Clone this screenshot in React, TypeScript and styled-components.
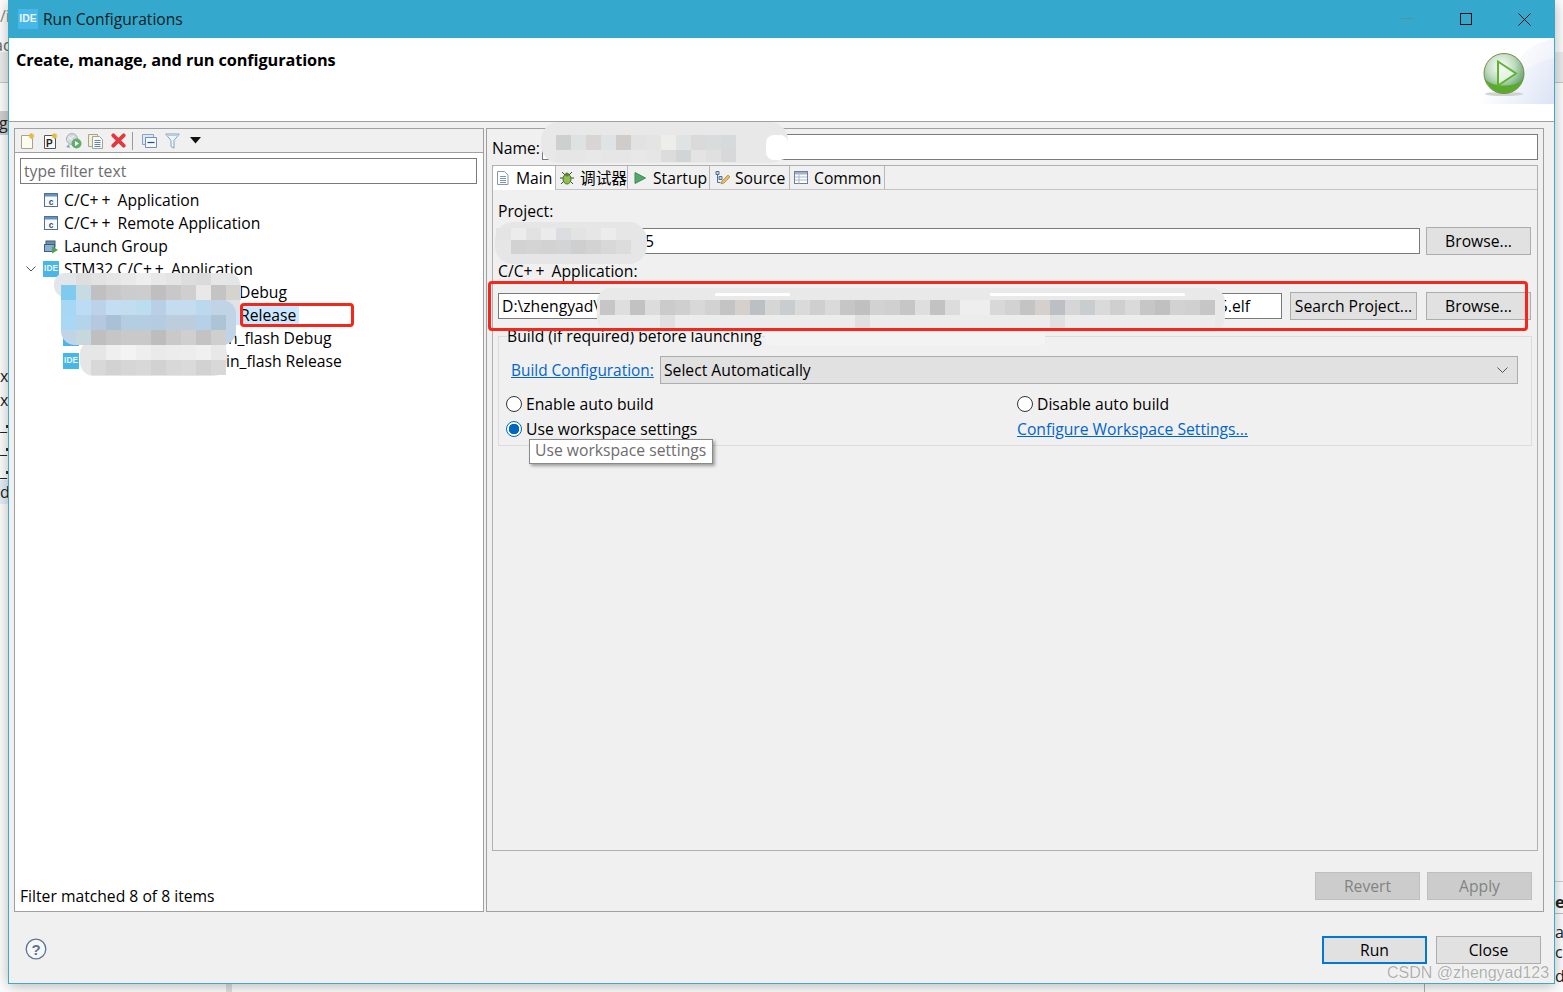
import React from "react";
import styled, { createGlobalStyle } from "styled-components";

const FONT = `"Open Sans", "Noto Sans", "Noto Sans CJK SC", sans-serif`;

const Global = createGlobalStyle`
  html, body { margin: 0; padding: 0; background: #fff; overflow: hidden; }
  * { box-sizing: border-box; }
`;

const Stage = styled.div`
  position: relative;
  width: 1563px;
  height: 992px;
  overflow: hidden;
  background: #fff;
  font-family: ${FONT};
  font-size: 15.7px;
  color: #000;
`;

/* desktop fragments behind the window */
const BackBand = styled.div<{ $x: number; $y: number; $w: number; $h: number; $bg: string }>`
  position: absolute;
  left: ${(p) => p.$x}px;
  top: ${(p) => p.$y}px;
  width: ${(p) => p.$w}px;
  height: ${(p) => p.$h}px;
  background: ${(p) => p.$bg};
`;
const BackText = styled.span<{ $x: number; $y: number; $c?: string; $b?: boolean }>`
  position: absolute;
  left: ${(p) => p.$x}px;
  top: ${(p) => p.$y}px;
  font-size: 16px;
  line-height: 20px;
  color: ${(p) => p.$c || "#222"};
  font-weight: ${(p) => (p.$b ? 700 : 400)};
`;

/* the dialog */
const Window = styled.div`
  position: absolute;
  left: 8px;
  top: 0;
  width: 1547px;
  height: 984px;
  display: flex;
  flex-direction: column;
  background: #f0f0f0;
  border: 1px solid #3aaacd;
  border-top: 0;
  box-shadow: 0 2px 14px rgba(0, 0, 0, 0.3);
`;
const TitleBar = styled.header`
  height: 38px;
  flex: none;
  margin: 0 -1px;
  background: #34a9cd;
  display: flex;
  align-items: center;
  padding: 0 1.5px 0 10px;
`;
const IdeBadge = styled.span<{ $size: number }>`
  width: ${(p) => p.$size}px;
  height: ${(p) => p.$size}px;
  flex: none;
  background: #47b6e8;
  color: #eaf7fd;
  font: 700 ${(p) => (p.$size * 0.52).toFixed(1)}px/1 "Liberation Sans", sans-serif;
  display: flex;
  align-items: center;
  justify-content: center;
`;
const TitleText = styled.span`
  margin-left: 5px;
  font-size: 15.6px;
  color: #0d1c22;
`;
const WinControls = styled.div`
  margin-left: auto;
  display: flex;
  align-items: center;
`;
const WinButton = styled.span`
  width: 58.5px;
  height: 38px;
  display: flex;
  align-items: center;
  justify-content: center;
`;
const Banner = styled.div`
  height: 84px;
  flex: none;
  background: #fff;
  border-bottom: 1px solid #a0a0a0;
  position: relative;
  padding: 10px 7px;
  display: flex;
  justify-content: space-between;
  align-items: flex-start;
`;
const BannerTitle = styled.h1`
  margin: 0;
  font-size: 16.3px;
  line-height: 24px;
  font-weight: 700;
  letter-spacing: -0.1px;
`;
const BannerArt = styled.svg`
  width: 78px;
  height: 66px;
  margin: -10px -7px 0 0;
`;
const Main = styled.div`
  height: 790px;
  flex: none;
  padding: 6px 10px 0 5px;
  display: flex;
  gap: 2px;
`;
const LeftPane = styled.section`
  width: 470px;
  flex: none;
  display: flex;
  flex-direction: column;
  background: #fff;
  border: 1px solid #a0a0a0;
`;
const Toolbar = styled.div`
  height: 24px;
  flex: none;
  background: #f0f0f0;
  border-bottom: 1px solid #a0a0a0;
  display: flex;
  align-items: center;
  padding-left: 2px;
`;
const ToolButton = styled.span`
  width: 22.5px;
  height: 20px;
  flex: none;
  display: flex;
  align-items: center;
  justify-content: center;
`;
const ToolSep = styled.span`
  width: 1px;
  height: 18px;
  margin: 0 6px 0 2.5px;
  background: #9a9a9a;
`;
const FilterInput = styled.div`
  height: 26px;
  margin: 5px 6px 4px 5px;
  flex: none;
  border: 1px solid #7a7a7a;
  padding-left: 3px;
  line-height: 24px;
  color: #6d6d6d;
`;
const Tree = styled.ul`
  flex: 1;
  list-style: none;
  margin: 0;
  padding: 0;
`;
const TreeRow = styled.li<{ $depth: number }>`
  height: 23px;
  display: flex;
  align-items: center;
  padding-left: ${(p) => (p.$depth === 0 ? 28 : 48)}px;
  gap: 5px;
  white-space: pre;
`;
const Twisty = styled.span`
  width: 12px;
  margin-left: -17px;
  margin-right: 0;
  display: flex;
`;
const TreeIcon = styled.span`
  width: 16px;
  height: 16px;
  flex: none;
  display: flex;
  align-items: center;
  justify-content: center;
`;
const TreeLabel = styled.span<{ $selected?: boolean }>`
  line-height: 20px;
  background: ${(p) => (p.$selected ? "#cce8ff" : "transparent")};
  padding-right: ${(p) => (p.$selected ? 3 : 0)}px;
`;
const Plus = styled.span`
  letter-spacing: 3px;
`;
const Masked = styled.span<{ $w: number }>`
  display: inline-block;
  width: ${(p) => p.$w}px;
`;
const PaneStatus = styled.div`
  height: 30px;
  flex: none;
  padding-left: 5px;
  line-height: 30px;
`;
const RightPane = styled.section`
  flex: 1;
  min-width: 0;
  border: 1px solid #a0a0a0;
  padding: 5px 5px 0;
  display: flex;
  flex-direction: column;
`;
const NameRow = styled.div`
  height: 26px;
  flex: none;
  display: flex;
  align-items: center;
  gap: 2px;
`;
const NameLabel = styled.span`
  padding-top: 2px;
`;
const TextField = styled.div<{ $w?: number }>`
  height: 26px;
  ${(p) => (p.$w ? `width: ${p.$w}px; flex: none;` : "flex: 1; min-width: 0;")}
  background: #fff;
  border: 1px solid #7a7a7a;
  padding: 0 3px;
  line-height: 24px;
  white-space: pre;
  overflow: hidden;
  display: flex;
`;
const FieldTail = styled.span`
  margin-left: auto;
  margin-right: 28px;
`;
const Folder = styled.div`
  height: 686px;
  flex: none;
  margin-top: 5px;
  border: 1px solid #b0b0b0;
  display: flex;
  flex-direction: column;
`;
const TabStrip = styled.div`
  height: 24px;
  flex: none;
  display: flex;
  border-bottom: 1px solid #c4c4c4;
`;
const Tab = styled.div<{ $w: number; $pad: number; $active?: boolean }>`
  width: ${(p) => p.$w}px;
  height: ${(p) => (p.$active ? 24 : 23)}px;
  flex: none;
  background: ${(p) => (p.$active ? "#fff" : "#f0f0f0")};
  border-right: 1px solid #b8b8b8;
  border-top-left-radius: ${(p) => (p.$active ? 3 : 0)}px;
  display: flex;
  align-items: center;
  gap: 5px;
  padding-left: ${(p) => p.$pad}px;
  white-space: pre;
`;
const TabIcon = styled.span`
  width: 16px;
  height: 16px;
  flex: none;
  display: flex;
  align-items: center;
  justify-content: center;
`;
const TabBody = styled.div`
  flex: 1;
  padding: 10px 5px 0;
  display: flex;
  flex-direction: column;
`;
const FieldLabel = styled.label<{ $gap: number }>`
  height: 22px;
  flex: none;
  line-height: 22px;
  margin-top: ${(p) => p.$gap}px;
`;
const FieldRow = styled.div<{ $gap: number; $h: number }>`
  height: ${(p) => p.$h}px;
  flex: none;
  margin-top: ${(p) => p.$gap}px;
  display: flex;
  align-items: center;
  padding-right: 1px;
`;
const Button = styled.button<{ $w: number; $gap?: number; $kind?: "default" | "disabled" }>`
  width: ${(p) => p.$w}px;
  height: 28px;
  flex: none;
  margin-left: ${(p) => p.$gap || 0}px;
  padding: 0;
  font: inherit;
  line-height: 24px;
  border: ${(p) => (p.$kind === "default" ? "2px solid #0078d7" : p.$kind === "disabled" ? "1px solid #bfbfbf" : "1px solid #adadad")};
  background: ${(p) => (p.$kind === "disabled" ? "#cccccc" : "#e1e1e1")};
  color: ${(p) => (p.$kind === "disabled" ? "#838383" : "#000")};
`;
const Group = styled.fieldset`
  position: relative;
  height: 110px;
  flex: none;
  min-width: 0;
  margin: 16px 0 0;
  padding: 19px 13px 0 12px;
  border: 1px solid #dcdcdc;
  display: flex;
  flex-direction: column;
`;
const GroupTitle = styled.span`
  position: absolute;
  left: 8px;
  top: -11px;
  line-height: 20px;
  background: #f0f0f0;
`;
const ConfigRow = styled.div`
  height: 28px;
  flex: none;
  display: flex;
  align-items: center;
`;
const Link = styled.a`
  color: #0066cc;
  text-decoration: underline;
  white-space: nowrap;
`;
const ConfigLink = styled(Link)`
  width: 149px;
  flex: none;
  font-size: 15.4px;
`;
const Combo = styled.div`
  flex: 1;
  height: 28px;
  background: #e1e1e1;
  border: 1px solid #adadad;
  display: flex;
  align-items: center;
  justify-content: space-between;
  padding: 0 9px 0 3px;
`;
const RadioGrid = styled.div`
  margin: 7px 0 0 -5px;
  display: grid;
  grid-template-columns: 511px 1fr;
  grid-auto-rows: 25px;
  align-items: center;
`;
const RadioItem = styled.div`
  display: flex;
  align-items: center;
  gap: 4px;
`;
const RadioDot = styled.span<{ $on?: boolean }>`
  width: 16px;
  height: 16px;
  flex: none;
  border-radius: 50%;
  border: 1px solid ${(p) => (p.$on ? "#0067c0" : "#333")};
  background: ${(p) => (p.$on ? "radial-gradient(circle, #0067c0 0 5px, #fff 5.5px)" : "#fff")};
`;
const ActionRow = styled.div`
  flex: none;
  margin-top: 21px;
  padding-right: 6px;
  display: flex;
  justify-content: flex-end;
  gap: 7px;
`;
const Footer = styled.footer`
  flex: 1;
  display: flex;
  align-items: flex-start;
  padding: 24px 13px 0 16px;
`;
const HelpIcon = styled.svg`
  width: 22px;
  height: 22px;
  margin-top: 2px;
`;
const FooterButtons = styled.div`
  margin-left: auto;
  display: flex;
  gap: 9px;
`;

/* things lying over the window */
const Tooltip = styled.div`
  position: absolute;
  left: 529px;
  top: 439px;
  width: 184px;
  height: 25px;
  background: #fff;
  border: 1px solid #8a8a8a;
  box-shadow: 2px 2px 3px rgba(0, 0, 0, 0.35);
  color: #6d6d6d;
  padding-left: 5px;
  line-height: 20px;
`;
const Patch = styled.svg<{ $x: number; $y: number }>`
  position: absolute;
  left: ${(p) => p.$x}px;
  top: ${(p) => p.$y}px;
`;
const RedBox = styled.div<{ $x: number; $y: number; $w: number; $h: number }>`
  position: absolute;
  left: ${(p) => p.$x}px;
  top: ${(p) => p.$y}px;
  width: ${(p) => p.$w}px;
  height: ${(p) => p.$h}px;
  border: 3px solid #f5261a;
  border-radius: 4px;
`;
const Watermark = styled.div`
  position: absolute;
  left: 1387px;
  top: 963px;
  font: 16px/20px "Liberation Sans", sans-serif;
  color: rgba(120, 120, 120, 0.6);
  text-shadow: 0 0 1px #fff, 0 0 1px #fff;
  white-space: nowrap;
`;

/* ---------- icons ---------- */
const Doc = ({ p }: { p?: boolean }) => (
  <svg width="16" height="16" viewBox="0 0 16 16">
    <path d="M1.500 2.500h8l3 3v10h-11z" fill={p ? "#fafafa" : "#fbfbf0"} stroke={p ? "#555" : "#a8a48c"} />
    {p && <text x="3" y="14" fontSize="10" fontWeight="700" fontFamily="Liberation Sans" fill="#222">P</text>}
    <path d="M11.500 0v6M8.500 3h6M9.500 1l4 4M13.500 1l-4 4" stroke="#e3b93c" strokeWidth="1.100" />
  </svg>
);
const Duplicate = () => (
  <svg width="16" height="16" viewBox="0 0 16 16">
    <path d="M.5 1.500h9v12h-9z" fill="#f3efdd" stroke="#a8a48c" />
    <path d="M4.500 3.500h7l3 3v9h-10z" fill="#f8f8f4" stroke="#a8a48c" />
    <path d="M6.500 7.500h6M6.500 9.500h6M6.500 11.500h6M6.500 13.500h6" stroke="#5c86b8" />
  </svg>
);
const Launch = () => (
  <svg width="17" height="16" viewBox="0 0 17 16">
    <circle cx="7" cy="6" r="5.500" fill="#d5d9de" stroke="#a9b0b9" />
    <path d="M3 3l6 6M2 7l7-4" stroke="#f2f3f5" />
    <path d="M1 14l3-3 1 4z" fill="#8fa6bf" />
    <circle cx="11.500" cy="10.500" r="5" fill="#5fae6e" />
    <path d="M10 8l4 2.500-4 2.500z" fill="#fff" />
  </svg>
);
const RedX = () => (
  <svg width="15" height="15" viewBox="0 0 15 15">
    <path d="M2.300 2.300l10.400 10.400M12.700 2.300L2.300 12.700" stroke="#dd3b40" strokeWidth="3.800" strokeLinecap="round" />
  </svg>
);
const Collapse = () => (
  <svg width="16" height="16" viewBox="0 0 16 16">
    <path d="M.5 1.500h11v10H.5z" fill="#dfe8f1" stroke="#88a6c2" />
    <path d="M3.500 4.500h11v10h-11z" fill="#f6f9fc" stroke="#6f91b2" />
    <path d="M5.500 9.500h7" stroke="#1e4d7a" strokeWidth="1.200" />
  </svg>
);
const Funnel = () => (
  <svg width="15" height="16" viewBox="0 0 15 16">
    <path d="M.7 1h13.600L9 7.500v7.700l-3-1.700V7.500z" fill="#eef5f9" stroke="#7fa6bd" />
    <path d="M3 2.500h9" stroke="#b5ccd9" />
  </svg>
);
const DropTri = () => (
  <svg width="11" height="7" viewBox="0 0 11 7"><path d="M0 0h11L5.500 6.500z" fill="#111" /></svg>
);
const AppIcon = () => (
  <svg width="16" height="16" viewBox="0 0 16 16">
    <rect x="1.500" y="1.500" width="13" height="13" fill="#f7f9fb" stroke="#54708e" />
    <rect x="2" y="2" width="12" height="2.500" fill="#5f93c6" />
    <text x="8" y="12.500" fontSize="8.500" fontWeight="700" textAnchor="middle" fontFamily="Liberation Sans" fill="#3a4f66">c</text>
  </svg>
);
const GroupIcon = () => (
  <svg width="16" height="16" viewBox="0 0 16 16">
    <rect x="3" y="3" width="9" height="6" fill="#6c8fb0" stroke="#3e5d7c" />
    <rect x="1.500" y="6.500" width="10" height="7" fill="#8db0cc" stroke="#3e5d7c" />
    <path d="M9 8l6 4-6 3.500z" fill="#4ea35c" />
  </svg>
);
const PageIcon = () => (
  <svg width="14" height="16" viewBox="0 0 14 16">
    <path d="M1.500 1.500h7l3.500 3.500v9.500H1.500z" fill="#fff" stroke="#8b96a8" />
    <path d="M4 6.500h6M4 8.500h6M4 10.500h6M4 12.500h6" stroke="#7f93b4" />
  </svg>
);
const BugIcon = () => (
  <svg width="16" height="16" viewBox="0 0 16 16">
    <g stroke="#3c4a2e" strokeWidth="1">
      <path d="M3 2l3 3M13 2l-3 3M1 8h3M12 8h3M2 14l3-3M14 14l-3-3" />
    </g>
    <ellipse cx="8" cy="9" rx="4" ry="5" fill="#8fbf4d" stroke="#4d6b2c" />
    <circle cx="8" cy="4.500" r="2" fill="#5d7f35" />
  </svg>
);
const PlayIcon = () => (
  <svg width="14" height="14" viewBox="0 0 14 14">
    <path d="M2 1.500L12.500 7 2 12.500z" fill="#53a86a" stroke="#3f8a55" />
  </svg>
);
const SourceIcon = () => (
  <svg width="16" height="16" viewBox="0 0 16 16">
    <path d="M2 1.500h3v3H2zM5 6.500h3v3H5z" fill="#c8d6e8" stroke="#4d6f9c" />
    <path d="M3.500 4.500v8h3" stroke="#4d6f9c" fill="none" />
    <path d="M7 14l1-3 6-6 2 2-6 6z" fill="#e9bb62" stroke="#a87f38" strokeWidth=".7" />
  </svg>
);
const TableIcon = () => (
  <svg width="14" height="14" viewBox="0 0 14 14">
    <rect x=".5" y=".5" width="13" height="12" fill="#fff" stroke="#6f7f99" />
    <rect x="1" y="1" width="12" height="2.500" fill="#9db1cd" />
    <path d="M1 6h12M1 9h12M5 3.500v9" stroke="#a9b6ca" />
  </svg>
);

/* ---------- pixelated redactions ---------- */
type Row = { x: number; y: number; h: number; colors: string[]; w?: number };
type Blob = { x: number; y: number; w: number; h: number; r: number; fill: string };
const Mosaic = ({ x, y, w, h, blobs, rows }: { x: number; y: number; w: number; h: number; blobs: Blob[]; rows: Row[] }) => (
  <Patch $x={x} $y={y} width={w} height={h} viewBox={`${x} ${y} ${w} ${h}`}>
    {blobs.map((b, i) => (
      <rect key={i} x={b.x} y={b.y} width={b.w} height={b.h} rx={b.r} fill={b.fill} />
    ))}
    {rows.map((r, ri) =>
      r.colors.map((c, ci) => (
        <rect key={`${ri}-${ci}`} x={r.x + ci * (r.w || 15)} y={r.y} width={r.w || 15} height={r.h} fill={c} />
      ))
    )}
  </Patch>
);

const appGrays = ["#c6c6c6", "#dedede", "#c2c2c2", "#dcdcdc", "#cbcbcb", "#cfcfcf", "#d8d8d8", "#d2d2d2", "#c4c4c4", "#d6d0cc", "#bcc0c4", "#d6d6d6", "#c8cdd0", "#dadada", "#cfcfcf", "#dadada", "#c6c6c6", "#c0c0c0", "#d2d2d2", "#d0d0d0"];
const appRowA = Array.from({ length: 41 }, (_, i) => (i === 24 || i === 25 ? "#eeeeee" : appGrays[i % appGrays.length]));
const appRowB = Array.from({ length: 41 }, (_, i) => (i % 13 === 4 ? "#e0e0e0" : "#ececec"));

export default function App() {
  return (
    <Stage>
      <Global />
      <BackBand $x={0} $y={52} $w={8} $h={30} $bg="#eeeeee" />
      <BackBand $x={0} $y={82} $w={8} $h={1} $bg="#c9c9c9" />
      <BackBand $x={0} $y={111} $w={8} $h={24} $bg="#d2d2d2" />
      <BackBand $x={0} $y={480} $w={8} $h={24} $bg="#e5f1fb" />
      <BackBand $x={6} $y={425} $w={2} $h={3} $bg="#3a2a1a" />
      <BackBand $x={6} $y={448} $w={2} $h={3} $bg="#3a2a1a" />
      <BackBand $x={6} $y={471} $w={2} $h={3} $bg="#3a2a1a" />
      <BackBand $x={1555} $y={52} $w={8} $h={30} $bg="#eeeeee" />
      <BackBand $x={1555} $y={82} $w={8} $h={1} $bg="#c9c9c9" />
      <BackBand $x={1555} $y={881} $w={8} $h={1} $bg="#d0d0d0" />
      <BackBand $x={1555} $y={913} $w={8} $h={1} $bg="#c0c0c0" />
      <BackBand $x={226} $y={984} $w={6} $h={8} $bg="#e2e2e2" />
      <BackBand $x={1424} $y={984} $w={1} $h={8} $bg="#b0b0b0" />
      <BackText $x={0} $y={6} $c="#8b8b8b">/i</BackText>
      <BackText $x={-6} $y={35} $c="#666">ac</BackText>
      <BackText $x={-1} $y={113}>gt</BackText>
      <BackText $x={0} $y={366}>x</BackText>
      <BackText $x={0} $y={390}>x</BackText>
      <BackText $x={0} $y={415}>_</BackText>
      <BackText $x={0} $y={438}>_</BackText>
      <BackText $x={0} $y={461}>_</BackText>
      <BackText $x={0} $y={482}>d</BackText>
      <BackText $x={1555} $y={892} $b>e</BackText>
      <BackText $x={1555} $y={922}>al</BackText>
      <BackText $x={1555} $y={942}>c</BackText>
      <BackText $x={1555} $y={966}>d</BackText>

      <Window>
        <TitleBar>
          <IdeBadge $size={20}>IDE</IdeBadge>
          <TitleText>Run Configurations</TitleText>
          <WinControls>
            <WinButton>
              <svg width="12" height="2"><path d="M0 .5h12" stroke="#5a8ea3" /></svg>
            </WinButton>
            <WinButton>
              <svg width="12" height="12"><rect x=".5" y=".5" width="11" height="11" fill="none" stroke="#111" /></svg>
            </WinButton>
            <WinButton>
              <svg width="13" height="13"><path d="M.5.5l12 12M12.500.5l-12 12" stroke="#111" /></svg>
            </WinButton>
          </WinControls>
        </TitleBar>
        <Banner>
          <BannerTitle>Create, manage, and run configurations</BannerTitle>
          <BannerArt viewBox="0 0 78 66">
            <defs>
              <linearGradient id="bannerBg" gradientUnits="userSpaceOnUse" x1="20" y1="30" x2="78" y2="62">
                <stop offset="0" stopColor="#ffffff" />
                <stop offset="1" stopColor="#dde4f5" />
              </linearGradient>
              <radialGradient id="ball" cx="0.42" cy="0.32" r="0.78">
                <stop offset="0" stopColor="#ffffff" />
                <stop offset="0.45" stopColor="#bedcbe" />
                <stop offset="0.8" stopColor="#6aa576" />
                <stop offset="1" stopColor="#4f9a3c" />
              </radialGradient>
            </defs>
            <rect width="78" height="66" fill="url(#bannerBg)" />
            <path d="M0 0h78C58 6 50 10 44 22 L0 22z" fill="#fff" />
            <path d="M0 0h78v20C60 24 50 30 44 40L0 40z" fill="#fff" fillOpacity=".35" />
            <ellipse cx="28" cy="56" rx="19" ry="2" fill="#cfd3cf" />
            <circle cx="28" cy="35.500" r="20" fill="url(#ball)" stroke="#7c8a4a" />
            <path d="M8.800 40a20 20 0 0 0 38.400 0c-4 10-34 10-38.400 0z" fill="#58ac2a" />
            <path d="M22 23.500L40 35.500 22 47.500z" fill="#eef8ee" fillOpacity=".75" stroke="#5fb32f" strokeWidth="2" />
          </BannerArt>
        </Banner>
        <Main>
          <LeftPane>
            <Toolbar>
              <ToolButton><Doc /></ToolButton>
              <ToolButton><Doc p /></ToolButton>
              <ToolButton><Launch /></ToolButton>
              <ToolButton><Duplicate /></ToolButton>
              <ToolButton><RedX /></ToolButton>
              <ToolSep />
              <ToolButton><Collapse /></ToolButton>
              <ToolButton><Funnel /></ToolButton>
              <ToolButton><DropTri /></ToolButton>
            </Toolbar>
            <FilterInput>type filter text</FilterInput>
            <Tree>
              <TreeRow $depth={0}><TreeIcon><AppIcon /></TreeIcon><TreeLabel>C/C<Plus>++</Plus> Application</TreeLabel></TreeRow>
              <TreeRow $depth={0}><TreeIcon><AppIcon /></TreeIcon><TreeLabel>C/C<Plus>++</Plus> Remote Application</TreeLabel></TreeRow>
              <TreeRow $depth={0}><TreeIcon><GroupIcon /></TreeIcon><TreeLabel>Launch Group</TreeLabel></TreeRow>
              <TreeRow $depth={0}>
                <Twisty>
                  <svg width="10" height="6"><path d="M.5.500L5 5 9.500.5" fill="none" stroke="#555" /></svg>
                </Twisty>
                <TreeIcon><IdeBadge $size={16}>IDE</IdeBadge></TreeIcon>
                <TreeLabel>STM32 C/C<Plus>++</Plus> Application</TreeLabel>
              </TreeRow>
              <TreeRow $depth={1}><TreeIcon><IdeBadge $size={16}>IDE</IdeBadge></TreeIcon><TreeLabel><Masked $w={155} />Debug</TreeLabel></TreeRow>
              <TreeRow $depth={1}><TreeIcon><IdeBadge $size={16}>IDE</IdeBadge></TreeIcon><TreeLabel $selected><Masked $w={143} />5 Release</TreeLabel></TreeRow>
              <TreeRow $depth={1}><TreeIcon><IdeBadge $size={16}>IDE</IdeBadge></TreeIcon><TreeLabel><Masked $w={144} />n_flash Debug</TreeLabel></TreeRow>
              <TreeRow $depth={1}><TreeIcon><IdeBadge $size={16}>IDE</IdeBadge></TreeIcon><TreeLabel><Masked $w={142} />in_flash Release</TreeLabel></TreeRow>
            </Tree>
            <PaneStatus>Filter matched 8 of 8 items</PaneStatus>
          </LeftPane>
          <RightPane>
            <NameRow>
              <NameLabel>Name:</NameLabel>
              <TextField />
            </NameRow>
            <Folder>
              <TabStrip>
                <Tab $w={63} $pad={2} $active><TabIcon><PageIcon /></TabIcon>Main</Tab>
                <Tab $w={72} $pad={3}><TabIcon><BugIcon /></TabIcon>调试器</Tab>
                <Tab $w={82} $pad={4}><TabIcon><PlayIcon /></TabIcon>Startup</Tab>
                <Tab $w={80} $pad={4}><TabIcon><SourceIcon /></TabIcon>Source</Tab>
                <Tab $w={95} $pad={3}><TabIcon><TableIcon /></TabIcon>Common</Tab>
              </TabStrip>
              <TabBody>
                <FieldLabel $gap={0}>Project:</FieldLabel>
                <FieldRow $gap={5} $h={28}>
                  <TextField><Masked $w={143} />5</TextField>
                  <Button $w={105} $gap={6}>Browse...</Button>
                </FieldRow>
                <FieldLabel $gap={5}>C/C<Plus>++</Plus> Application:</FieldLabel>
                <FieldRow $gap={10} $h={28}>
                  <TextField $w={784}>D:\zhengyad\<FieldTail>5.elf</FieldTail></TextField>
                  <Button $w={127} $gap={8}>Search Project...</Button>
                  <Button $w={105} $gap={9}>Browse...</Button>
                </FieldRow>
                <Group>
                  <GroupTitle>Build (if required) before launching</GroupTitle>
                  <ConfigRow>
                    <ConfigLink>Build Configuration:</ConfigLink>
                    <Combo>
                      Select Automatically
                      <svg width="11" height="7"><path d="M.5.500L5.500 5.500 10.500.5" fill="none" stroke="#555" /></svg>
                    </Combo>
                  </ConfigRow>
                  <RadioGrid>
                    <RadioItem><RadioDot />Enable auto build</RadioItem>
                    <RadioItem><RadioDot />Disable auto build</RadioItem>
                    <RadioItem><RadioDot $on />Use workspace settings</RadioItem>
                    <Link>Configure Workspace Settings...</Link>
                  </RadioGrid>
                </Group>
              </TabBody>
            </Folder>
            <ActionRow>
              <Button $w={105} $kind="disabled">Revert</Button>
              <Button $w={105} $kind="disabled">Apply</Button>
            </ActionRow>
          </RightPane>
        </Main>
        <Footer>
          <HelpIcon viewBox="0 0 22 22">
            <circle cx="11" cy="11" r="9.800" fill="#f6f7f9" stroke="#5f7391" strokeWidth="1.300" />
            <text x="11" y="16.500" fontSize="15" fontWeight="700" textAnchor="middle" fontFamily="Liberation Sans" fill="#5f7391">?</text>
          </HelpIcon>
          <FooterButtons>
            <Button $w={105} $kind="default">Run</Button>
            <Button $w={105}>Close</Button>
          </FooterButtons>
        </Footer>
      </Window>

      <Tooltip>Use workspace settings</Tooltip>

      {/* tree redaction */}
      <Mosaic
        x={54} y={273} w={190} h={103}
        blobs={[
          { x: 54, y: 273, w: 186, h: 24, r: 11, fill: "#e2e6e8" },
          { x: 61, y: 285, w: 179, h: 30, r: 4, fill: "#dfe3e6" },
          { x: 61, y: 300, w: 175, h: 45, r: 14, fill: "#c0d4e6" },
          { x: 80, y: 340, w: 147, h: 36, r: 14, fill: "#e6e6e6" },
        ]}
        rows={[
          { x: 76, y: 273, h: 12, colors: ["#dedede", "#e2e2e2", "#e6e6e6", "#e9e9e9", "#eeeeee", "#e8e8e8", "#e4e4e4", "#dddddd", "#dadada", "#e6e6e6"] },
          { x: 61, y: 285, h: 15, colors: ["#7ecbee", "#c6dbe2", "#c0c0c0", "#c8c8c8", "#cccccc", "#cdcdcd", "#bfbfbf", "#c8c8c8", "#cfcfcf", "#e8e8e8", "#c4c4c4", "#d6d2cd"] },
          { x: 61, y: 300, h: 15, colors: ["#a7d7f5", "#bcdcf5", "#bcd2e8", "#c5ddf2", "#c2dcf0", "#bcdcf0", "#b9cfe5", "#c5dcee", "#c5dcee", "#bcd8ef", "#c0d4e5"] },
          { x: 61, y: 315, h: 15, colors: ["#a9d7f5", "#b4d4ec", "#b5c8e0", "#a9c0d6", "#b5cde0", "#b5cde0", "#b5cbdf", "#bccdde", "#bccdde", "#b5d0e8", "#adc3d6"] },
          { x: 76, y: 330, h: 15, colors: ["#c5d9dd", "#bfbfbf", "#c6c6c6", "#c9c9c9", "#c9c9c9", "#bdbdbd", "#c9c9c9", "#cfcfcf", "#c3c3c3", "#cfcfcf"] },
          { x: 91, y: 345, h: 15, colors: ["#e6e6e6", "#efefef", "#f3f3f3", "#eeeeee", "#eaeaea", "#ececec", "#ededed", "#f0f0f0", "#e8e8e8"] },
          { x: 91, y: 360, h: 15, colors: ["#d8d8d8", "#d2d2d2", "#d6d6d6", "#d8d8d8", "#d2d2d2", "#d8d8d8", "#dadada", "#d2d2d2", "#d8d8d8"] },
        ]}
      />
      {/* name redaction */}
      <Mosaic
        x={541} y={122} w={247} h={42}
        blobs={[
          { x: 541, y: 122, w: 247, h: 41, r: 18, fill: "#e8e8e8" },
          { x: 766, y: 135, w: 22, h: 25, r: 8, fill: "#ffffff" },
        ]}
        rows={[
          { x: 556, y: 135, h: 15, colors: ["#ced0d0", "#dfe2e2", "#d8d6d4", "#e0e3e3", "#cfccc9", "#e2e2e2", "#e4e4e4", "#efedea", "#dfe3e3", "#dbd9d9", "#d9dcdc", "#d6dada", "#e8e8e8"] },
          { x: 556, y: 150, h: 12, colors: ["#e6e6e6", "#e6e6e6", "#e8e8e8", "#e6e6e6", "#e6e6e6", "#e8e8e8", "#e6e6e6", "#dcdcdc", "#d2d5d5", "#e4e4e4", "#e0e0e0", "#d8d8d8", "#e8e8e8"] },
        ]}
      />
      {/* project redaction */}
      <Mosaic
        x={495} y={222} w={152} h={42}
        blobs={[{ x: 495, y: 222, w: 152, h: 42, r: 18, fill: "#e6e6e6" }]}
        rows={[
          { x: 496, y: 228, h: 12, colors: ["#e4e4e4", "#ececec", "#e2e2e2", "#ebebeb", "#dcdde0", "#e3e3e3", "#e6e6e6", "#ececec", "#e6e6e6"] },
          { x: 511, y: 240, h: 14, colors: ["#d2d2d2", "#d4d4d4", "#d2d2d2", "#d2d4d6", "#cfcfcf", "#d3d3d3", "#d8d8d8", "#dcdcdc"] },
        ]}
      />
      {/* application path redaction */}
      <Mosaic
        x={597} y={288} w={630} h={60}
        blobs={[
          { x: 765, y: 326, w: 280, h: 20, r: 6, fill: "#f3f3f3" },
          { x: 597, y: 288, w: 628, h: 44, r: 14, fill: "#e9e9e9" },
          { x: 715, y: 293, w: 75, h: 3, r: 1, fill: "#ffffff" },
          { x: 990, y: 293, w: 195, h: 3, r: 1, fill: "#ffffff" },
        ]}
        rows={[
          { x: 600, y: 300, h: 15, colors: appRowA },
          { x: 600, y: 315, h: 14, colors: appRowB },
        ]}
      />

      <RedBox $x={488} $y={281} $w={1040} $h={50} />
      <RedBox $x={240} $y={303} $w={114} $h={24} />
      <Watermark>CSDN @zhengyad123</Watermark>
    </Stage>
  );
}
